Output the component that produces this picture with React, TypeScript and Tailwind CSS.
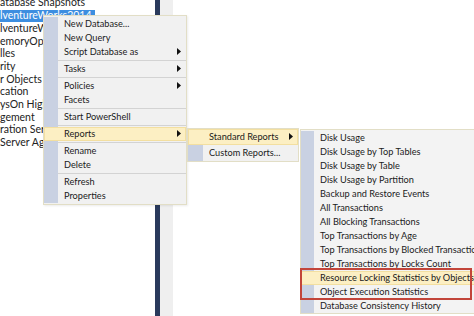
import React from "react";

const font = { fontFamily: 'Lato, "Open Sans", sans-serif' };

function Arrow() {
  return (
    <svg width="4" height="7" viewBox="0 0 4 7" className="block">
      <path d="M0 0 L4 3.5 L0 7 Z" fill="#111" />
    </svg>
  );
}

type Item = { label?: string; sep?: boolean; arrow?: boolean; hl?: boolean };

function Menu({
  items,
  gutter,
  textPad,
  itemH,
}: {
  items: Item[];
  gutter: string;
  textPad: string;
  itemH: string;
}) {
  return (
    <div className="flex flex-col">
      {items.map((it, i) =>
        it.sep ? (
          <div key={i} className="flex h-[3px]">
            <div className={`${gutter} shrink-0 bg-[#c9d1e2] h-full`} />
            <div className="flex-1 flex flex-col justify-center">
              <div className="h-px bg-[#d3d3d3]" />
            </div>
          </div>
        ) : (
          <div
            key={i}
            className={`flex ${itemH} items-center ${it.hl ? "bg-[#fcefc3] shadow-[inset_0_0_0_1px_#f3dfa0]" : ""}`}
          >
            <div className={`${gutter} shrink-0 h-full ${it.hl ? "" : "bg-[#c9d1e2]"}`} />
            <div className={`flex-1 min-w-0 flex items-center ${textPad} whitespace-nowrap text-[#1b1b1b]`}>
              <span className="flex-1">{it.label}</span>
              {it.arrow && <span className="shrink-0 ml-[4px]"><Arrow /></span>}
            </div>
          </div>
        )
      )}
    </div>
  );
}

const treeLines: { t: string; sel?: boolean }[] = [
  { t: "atabase Snapshots" },
  { t: "lventureWorks2014", sel: true },
  { t: "lventureWorks2014DW" },
  { t: "emoryOptimized" },
  { t: "lles" },
  { t: "rity" },
  { t: "r Objects" },
  { t: "cation" },
  { t: "ysOn High Availability" },
  { t: "gement" },
  { t: "ration Services Catalogs" },
  { t: "Server Agent" },
];

export default function App() {
  const m1: Item[] = [
    { label: "New Database..." },
    { label: "New Query" },
    { label: "Script Database as", arrow: true },
    { sep: true },
    { label: "Tasks", arrow: true },
    { sep: true },
    { label: "Policies", arrow: true },
    { label: "Facets" },
    { sep: true },
    { label: "Start PowerShell" },
    { sep: true },
    { label: "Reports", arrow: true, hl: true },
    { sep: true },
    { label: "Rename" },
    { label: "Delete" },
    { sep: true },
    { label: "Refresh" },
    { label: "Properties" },
  ];
  const m2: Item[] = [
    { label: "Standard Reports", arrow: true, hl: true },
    { label: "Custom Reports..." },
  ];
  const m3: Item[] = [
    { label: "Disk Usage" },
    { label: "Disk Usage by Top Tables" },
    { label: "Disk Usage by Table" },
    { label: "Disk Usage by Partition" },
    { label: "Backup and Restore Events" },
    { label: "All Transactions" },
    { label: "All Blocking Transactions" },
    { label: "Top Transactions by Age" },
    { label: "Top Transactions by Blocked Transactions" },
    { label: "Top Transactions by Locks Count" },
    { label: "Resource Locking Statistics by Objects", hl: true },
    { label: "Object Execution Statistics" },
    { label: "Database Consistency History" },
  ];

  return (
    <div
      className="relative w-[474px] h-[316px] overflow-hidden bg-white flex text-[9.2px]"
      style={font}
    >
      {/* tree panel */}
      <div className="w-[155px] shrink-0 h-full overflow-hidden bg-white">
        <div className="mt-[-3px] flex flex-col">
          {treeLines.map((l, i) => (
            <div key={i} className="h-[12.7px] flex items-center whitespace-nowrap text-[10.5px] text-[#222]">
              {l.sel ? (
                <span className="bg-[#3d8ee0] text-white pr-[3px] h-[12px] flex items-center">{l.t}</span>
              ) : (
                <span>{l.t}</span>
              )}
            </div>
          ))}
        </div>
      </div>
      <div className="w-[5px] shrink-0 h-full bg-[#2a3a5c]" />
      <div className="w-[13px] shrink-0 h-full bg-[#efefef]" />
      <div className="flex-1 h-full bg-white" />

      {/* menu 1 */}
      <div className="absolute left-[43px] top-[15px] w-[144px] border border-[#e2dec6] bg-[#f1f1f1] py-px shadow-[1px_1px_2px_rgba(0,0,0,0.08)]">
        <Menu items={m1} gutter="w-[14px]" textPad="pl-[6px] pr-[5px]" itemH="h-[14px]" />
      </div>

      {/* menu 2 */}
      <div className="absolute left-[187px] top-[128px] w-[112px] border border-[#e2dec6] bg-[#f1f1f1]">
        <Menu items={m2} gutter="w-[15px]" textPad="pl-[6px] pr-[5px]" itemH="h-[16px]" />
      </div>

      {/* menu 3 */}
      <div className="absolute left-[300px] top-[129px] w-[260px] border border-[#e2dec6] bg-[#f3f3f3] pt-px">
        <Menu items={m3} gutter="w-[13px]" textPad="pl-[6px]" itemH="h-[14px]" />
      </div>

      {/* red highlight box */}
      <div className="absolute left-[300px] top-[268px] w-[172px] h-[32px] border-2 border-[#c2453a]" />
    </div>
  );
}
